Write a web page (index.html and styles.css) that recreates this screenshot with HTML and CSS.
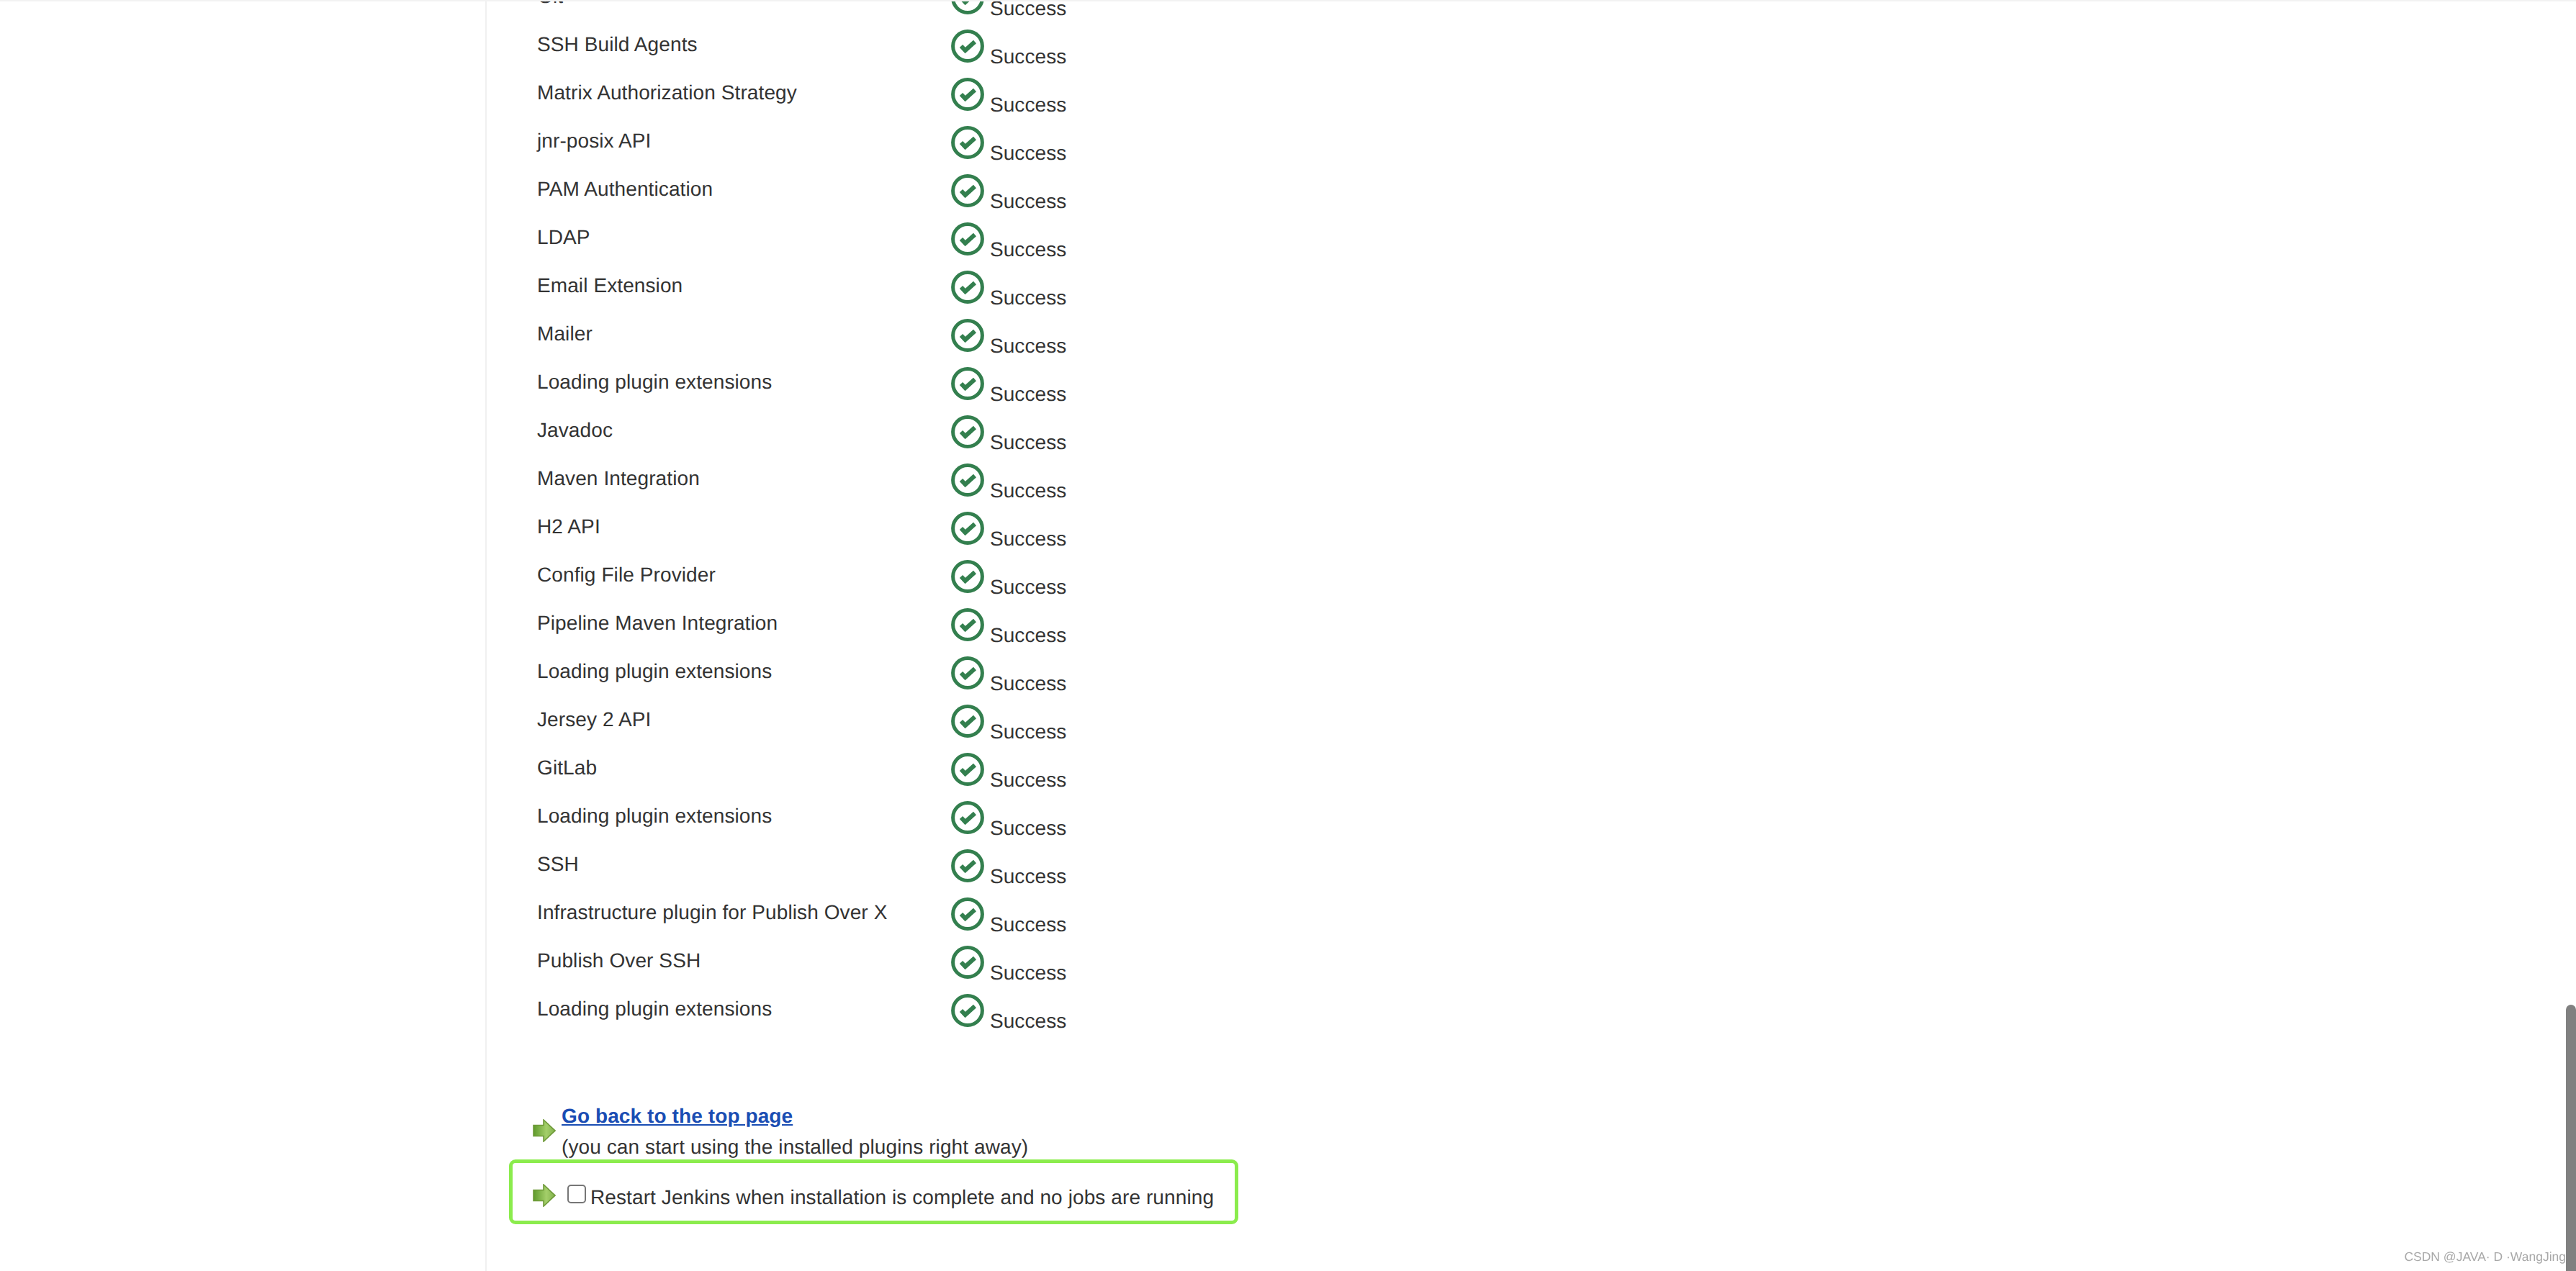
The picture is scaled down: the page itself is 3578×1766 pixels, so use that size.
FILE: index.html
```html
<!DOCTYPE html>
<html lang="en">
<head>
<meta charset="utf-8">
<title>Update Center</title>
<link rel="stylesheet" href="styles.css">
</head>
<body>
<svg class="defs" width="0" height="0" aria-hidden="true">
  <defs>
    <linearGradient id="arrow-fill" x1="0" y1="0" x2="1" y2="0">
      <stop offset="0" stop-color="#5f9a2c"/>
      <stop offset="0.6" stop-color="#a4cf6a"/>
      <stop offset="1" stop-color="#7fb04a"/>
    </linearGradient>
    <symbol id="ok" viewBox="0 0 46 46">
      <circle cx="23" cy="23" r="20.4" fill="none" stroke="#337f4e" stroke-width="5"/>
      <path d="M14 23 19.7 29 33 17" fill="none" stroke="#337f4e" stroke-width="6"/>
    </symbol>
    <symbol id="arrow" viewBox="0 0 32 32">
      <path d="M1 8.5H15V1L31 16 15 31V23.5H1Z" fill="url(#arrow-fill)" stroke="#6f9a3a" stroke-width="1.6"/>
    </symbol>
  </defs>
</svg>
<div class="top-strip"></div>
<div class="page">
  <aside class="side"></aside>
  <main class="main">
    <div class="results">
      <div class="name">Git</div><div class="status"><svg class="ok"><use href="#ok"/></svg> Success</div>
      <div class="name">SSH Build Agents</div><div class="status"><svg class="ok"><use href="#ok"/></svg> Success</div>
      <div class="name">Matrix Authorization Strategy</div><div class="status"><svg class="ok"><use href="#ok"/></svg> Success</div>
      <div class="name">jnr-posix API</div><div class="status"><svg class="ok"><use href="#ok"/></svg> Success</div>
      <div class="name">PAM Authentication</div><div class="status"><svg class="ok"><use href="#ok"/></svg> Success</div>
      <div class="name">LDAP</div><div class="status"><svg class="ok"><use href="#ok"/></svg> Success</div>
      <div class="name">Email Extension</div><div class="status"><svg class="ok"><use href="#ok"/></svg> Success</div>
      <div class="name">Mailer</div><div class="status"><svg class="ok"><use href="#ok"/></svg> Success</div>
      <div class="name">Loading plugin extensions</div><div class="status"><svg class="ok"><use href="#ok"/></svg> Success</div>
      <div class="name">Javadoc</div><div class="status"><svg class="ok"><use href="#ok"/></svg> Success</div>
      <div class="name">Maven Integration</div><div class="status"><svg class="ok"><use href="#ok"/></svg> Success</div>
      <div class="name">H2 API</div><div class="status"><svg class="ok"><use href="#ok"/></svg> Success</div>
      <div class="name">Config File Provider</div><div class="status"><svg class="ok"><use href="#ok"/></svg> Success</div>
      <div class="name">Pipeline Maven Integration</div><div class="status"><svg class="ok"><use href="#ok"/></svg> Success</div>
      <div class="name">Loading plugin extensions</div><div class="status"><svg class="ok"><use href="#ok"/></svg> Success</div>
      <div class="name">Jersey 2 API</div><div class="status"><svg class="ok"><use href="#ok"/></svg> Success</div>
      <div class="name">GitLab</div><div class="status"><svg class="ok"><use href="#ok"/></svg> Success</div>
      <div class="name">Loading plugin extensions</div><div class="status"><svg class="ok"><use href="#ok"/></svg> Success</div>
      <div class="name">SSH</div><div class="status"><svg class="ok"><use href="#ok"/></svg> Success</div>
      <div class="name">Infrastructure plugin for Publish Over X</div><div class="status"><svg class="ok"><use href="#ok"/></svg> Success</div>
      <div class="name">Publish Over SSH</div><div class="status"><svg class="ok"><use href="#ok"/></svg> Success</div>
      <div class="name">Loading plugin extensions</div><div class="status"><svg class="ok"><use href="#ok"/></svg> Success</div>
    </div>
    <div class="actions">
      <div class="action">
        <svg class="arrow arrow-top"><use href="#arrow"/></svg>
        <div class="action-text">
          <a class="back" href="#">Go back to the top page</a>
          <div>(you can start using the installed plugins right away)</div>
        </div>
      </div>
      <div class="highlight">
        <svg class="arrow"><use href="#arrow"/></svg>
        <label class="restart"><input class="check" type="checkbox"><span class="restart-text">Restart Jenkins when installation is complete and no jobs are running</span></label>
      </div>
    </div>
  </main>
</div>
<div class="scroll-thumb"></div>
<div class="watermark">CSDN @JAVA· D ·WangJing</div>
</body>
</html>
```
FILE: styles.css
```css
* { box-sizing: border-box; }
html, body { margin: 0; height: 100%; overflow: hidden; background: #fff; }
body {
  font-family: "Liberation Sans", Arial, sans-serif;
  font-size: 28px;
  line-height: 32px;
  letter-spacing: 0.1px;
  color: #333;
  text-rendering: geometricPrecision;
}
.defs { position: absolute; }
.top-strip {
  position: fixed; top: 0; left: 0; right: 0;
  height: 2px; background: #f2f2f2; z-index: 2;
}
.page { display: flex; margin-top: -33px; }
.side { width: 676px; flex: none; border-right: 2px solid #f0f0f0; height: 1900px; }
.main { padding-left: 70px; flex: 1; }
.results {
  display: grid;
  grid-template-columns: 575px auto;
  grid-auto-rows: 67px;
  justify-content: start;
}
.name { padding-top: 12px; }
.status { padding-top: 7px; white-space: nowrap; }
.ok { width: 46px; height: 46px; vertical-align: 1px; }
.actions { margin-top: 94px; margin-left: -6px; }
.action { display: flex; align-items: center; }
.arrow { width: 32px; height: 32px; flex: none; }
.arrow-top { margin-top: -3px; }
.action-text { margin-left: 8px; }
.back { color: #1a4db3; font-weight: 700; text-decoration: underline; display: block; margin-bottom: 11px; }
.highlight {
  display: flex; align-items: center;
  width: 1013px; height: 90px;
  margin-top: 1px; margin-left: -33px; padding: 9px 0 0 28px;
  border: 5px solid #8bec4d; border-radius: 9px;
}
.restart { display: flex; align-items: center; margin-left: 16px; white-space: nowrap; }
.restart-text { padding-top: 6px; }
.check {
  appearance: none; width: 26px; height: 26px; margin: 0 6px 3px 0;
  border: 2px solid #767676; border-radius: 5px; background: #fff;
}
.scroll-thumb {
  position: fixed; right: 0; top: 1396px; bottom: 0; width: 14px;
  background: #808080; border-radius: 7px 7px 0 0; z-index: 3;
}
.watermark {
  position: fixed; right: 14px; top: 1734px;
  font-family: "Liberation Sans", sans-serif; font-size: 17.5px; line-height: 24px;
  letter-spacing: 0;
  color: #a8a8a8; white-space: nowrap;
}
```
